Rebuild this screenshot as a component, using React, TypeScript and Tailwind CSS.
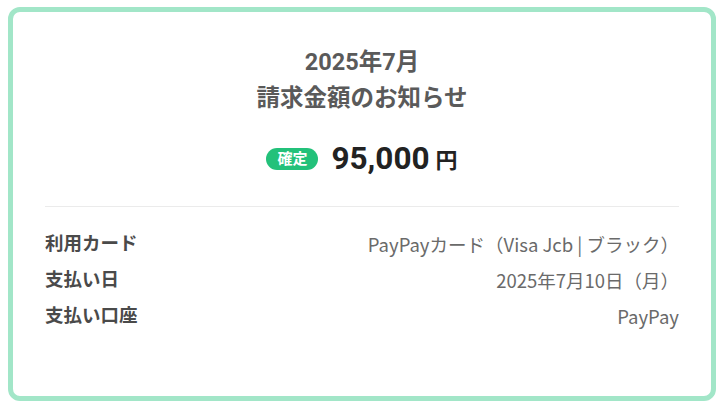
const rows = [
  { label: '利用カード', value: 'PayPayカード（Visa Jcb | ブラック）' },
  { label: '支払い日', value: '2025年7月10日（月）' },
  { label: '支払い口座', value: 'PayPay' },
];

export default function App() {
  return (
    <div className="w-[725px] h-[409px] bg-white pt-[7px] pl-2">
      <div
        className="w-[708px] h-[394px] rounded-[12px] border-[5px] border-[#a2e6c8] bg-white px-[32px] pt-[32px]"
        style={{ fontFamily: 'Roboto, "Noto Sans CJK JP", sans-serif' }}
      >
        {/* Title */}
        <div className="text-center text-[#5a5a5a] font-bold text-[23.5px] leading-[36px]">
          <div>2025年7月</div>
          <div>請求金額のお知らせ</div>
        </div>

        {/* Amount */}
        <div className="flex items-center justify-center mt-[23px] h-[40px]">
          <span className="rounded-full bg-[#23c17a] text-white font-bold text-[15px] leading-[22px] px-[11px] mr-[13px]">
            確定
          </span>
          <span className="text-[#222] font-bold text-[31.5px] leading-[40px]">95,000</span>
          <span className="text-[#222] font-bold text-[22px] leading-[40px] ml-[6px] mt-[4px]">円</span>
        </div>

        {/* Divider */}
        <div className="h-px bg-[#ebebeb] mt-[27px]" />

        {/* Details */}
        <div className="mt-[25px] flex flex-col gap-[11px]">
          {rows.map((row) => (
            <div key={row.label} className="flex justify-between items-center h-[25px]">
              <span className="text-[#4a4a4a] font-bold text-[18.5px]">{row.label}</span>
              <span
                className="text-[#6a6a6a] text-[18.5px]"
                style={{ fontFamily: '"Noto Sans CJK JP", sans-serif' }}
              >
                {row.value}
              </span>
            </div>
          ))}
        </div>
      </div>
    </div>
  );
}
